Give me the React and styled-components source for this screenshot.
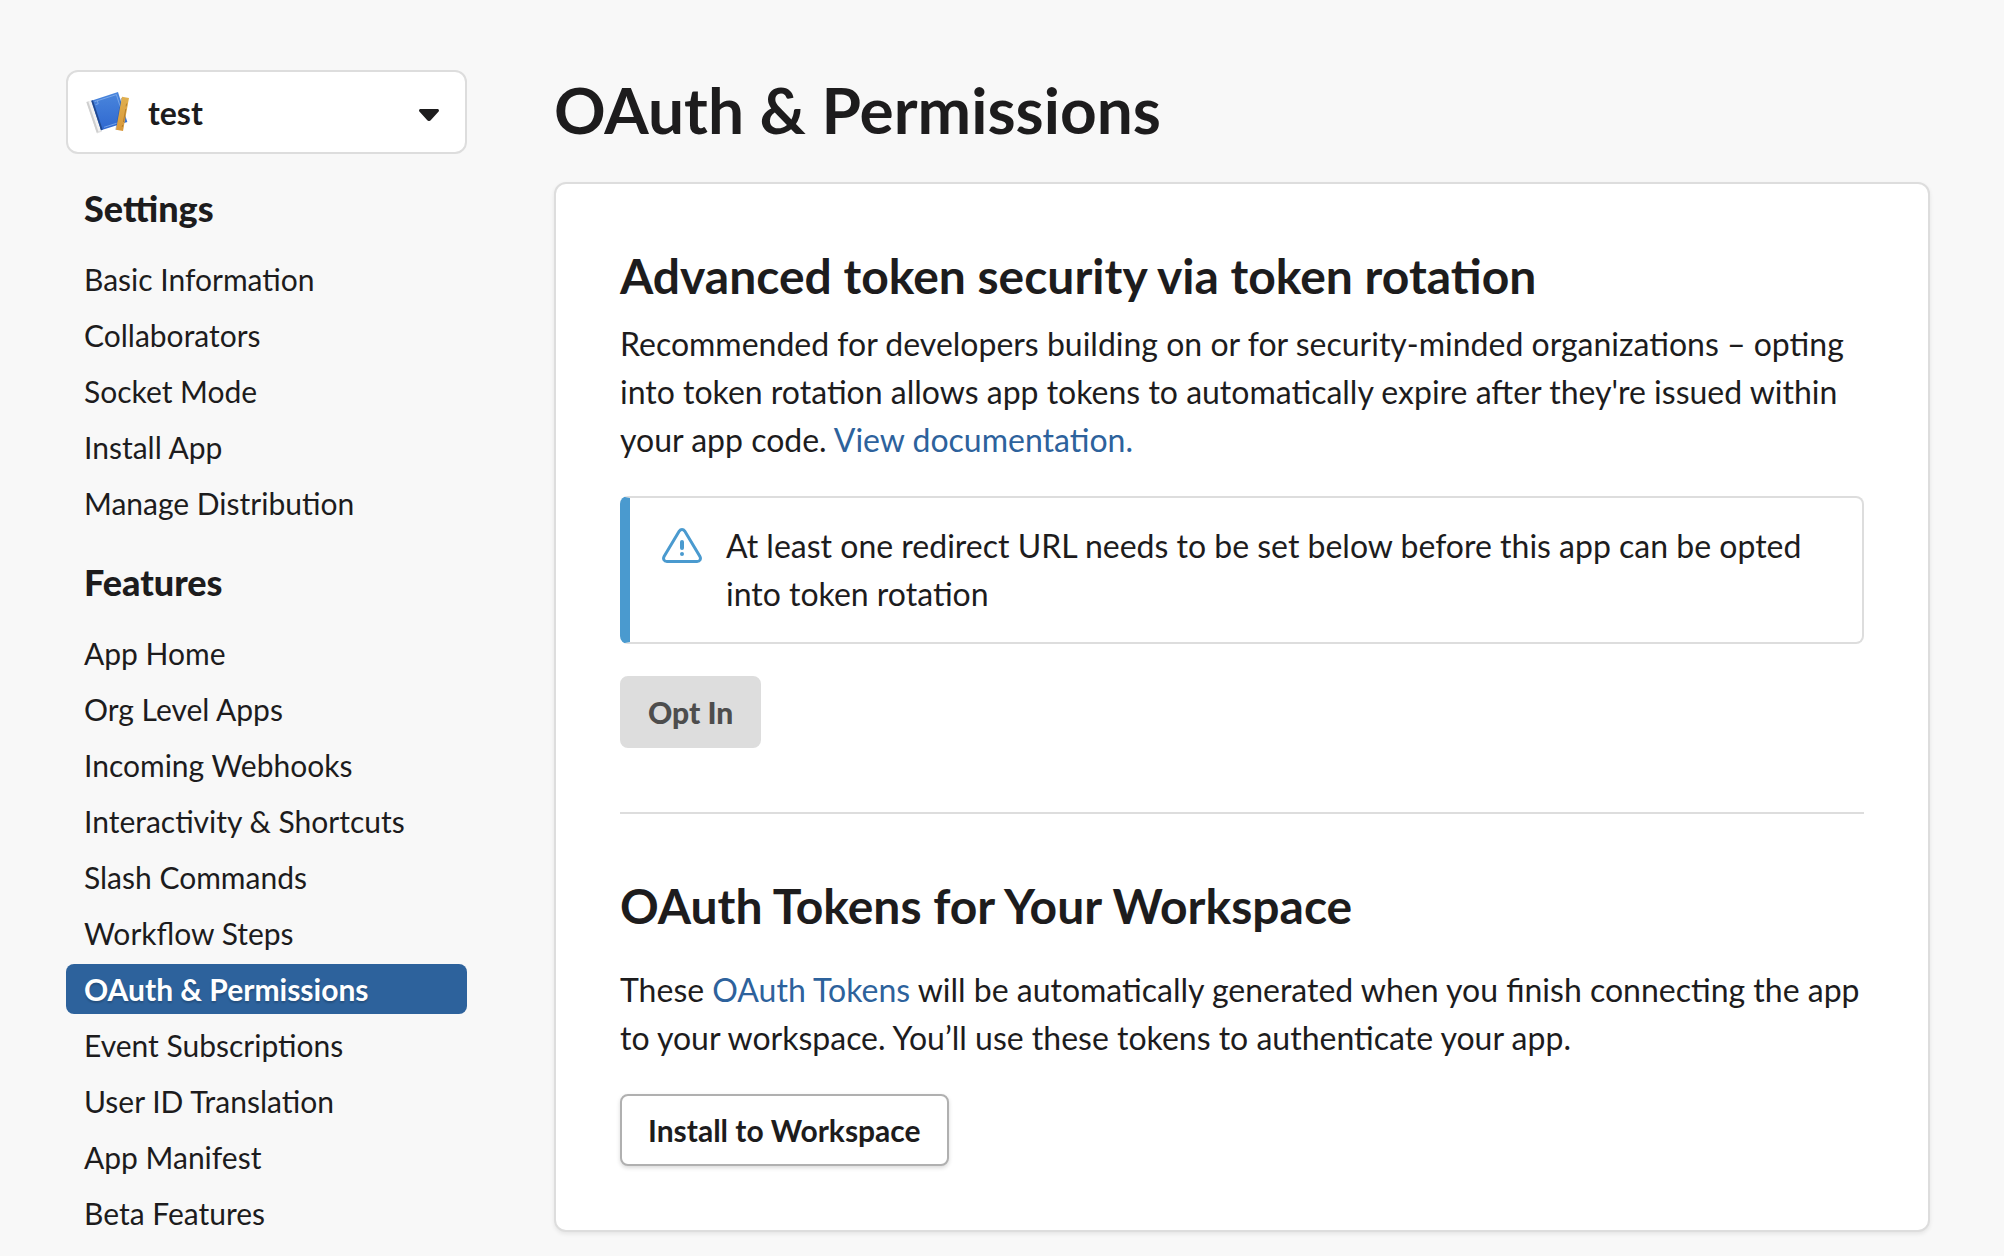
//OAuth & Permissions page of the app settings
import React from "react";
import styled, { createGlobalStyle } from "styled-components";

const GlobalStyle = createGlobalStyle`
  * {
    box-sizing: border-box;
  }

  body {
    margin: 0;
    background-color: #f8f8f8;
    color: #1d1c1d;
    font-family: Lato, "Liberation Sans", sans-serif;
    font-size: 32px;
    line-height: 48px;
  }
`;

const Page = styled.div`
  display: grid;
  grid-template-columns: 401px minmax(0, 1fr);
  gap: 87px;
  padding: 70px 74px 18px 66px;
`;

const Sidebar = styled.aside`
  display: flex;
  flex-direction: column;
`;

const AppPicker = styled.label`
  display: flex;
  align-items: center;
  gap: 18px;
  height: 84px;
  padding: 0 26px 0 18px;
  background-color: #fff;
  border: 2px solid #ddd;
  border-radius: 12px;
`;

const AppSelect = styled.select`
  flex: 1;
  min-width: 0;
  height: 48px;
  padding: 0;
  appearance: none;
  background: none;
  border: none;
  color: inherit;
  font-family: inherit;
  font-size: 32px;
  font-weight: 700;
`;

const NavTitle = styled.h2`
  margin: 30px 18px 22px;
  font-family: "Lato Black", Lato, sans-serif;
  font-size: 36px;
  font-weight: 900;
  line-height: 48px;
`;

const NavList = styled.ul`
  display: flex;
  flex-direction: column;
  gap: 6px;
  margin: 0;
  padding: 0;
  list-style: none;
`;

const NavLink = styled.a`
  display: block;
  padding: 0 18px;
  border-radius: 8px;
  background-color: ${(props) => (props.$active ? "#2d629c" : "transparent")};
  color: ${(props) => (props.$active ? "#fff" : "inherit")};
  font-size: 30px;
  font-weight: ${(props) => (props.$active ? 700 : 400)};
  line-height: 50px;
  text-decoration: none;
  text-shadow: ${(props) =>
    props.$active ? "0 2px 2px rgba(0, 0, 0, 0.2)" : "none"};
`;

const Main = styled.main`
  display: flex;
  flex-direction: column;
  gap: 32px;
`;

const PageTitle = styled.h1`
  margin: 0;
  font-size: 64px;
  font-weight: 700;
  line-height: 80px;
`;

const Card = styled.div`
  padding: 64px;
  background-color: #fff;
  border: 2px solid #ddd;
  border-radius: 12px;
  box-shadow: 0 2px 4px rgba(0, 0, 0, 0.08);
`;

const Section = styled.section`
  & + & {
    margin-top: 64px;
    padding-top: 64px;
    border-top: 2px solid #ddd;
  }
`;

const SectionTitle = styled.h2`
  margin: 0 0 ${(props) => (props.$spaced ? 32 : 16)}px;
  font-size: 48px;
  font-weight: 700;
  line-height: 56px;
`;

const Text = styled.p`
  margin: 0 0 32px;
`;

const TextLink = styled.a`
  color: #2d629c;
  text-decoration: none;
`;

const Alert = styled.div`
  display: flex;
  align-items: flex-start;
  gap: 24px;
  margin-bottom: 32px;
  padding: 24px 32px;
  border: 2px solid #ddd;
  border-left: 10px solid #4a9acf;
  border-radius: 8px;
`;

const AlertIcon = styled.svg`
  flex: none;
  width: 40px;
  height: 48px;
`;

const Button = styled.button`
  display: block;
  padding: 0 26px;
  background-color: #fff;
  border: 2px solid #b0b0b0;
  border-radius: 8px;
  box-shadow: 0 2px 4px rgba(0, 0, 0, 0.15);
  color: #1d1c1d;
  font-family: inherit;
  font-size: 30px;
  font-weight: 700;
  line-height: 68px;

  &:disabled {
    background-color: #ddd;
    border-color: #ddd;
    box-shadow: none;
    color: #4d4d4d;
    font-family: "Lato Black", Lato, sans-serif;
    font-weight: 900;
  }
`;

const settingsLinks = [
  "Basic Information",
  "Collaborators",
  "Socket Mode",
  "Install App",
  "Manage Distribution",
];

const featureLinks = [
  "App Home",
  "Org Level Apps",
  "Incoming Webhooks",
  "Interactivity & Shortcuts",
  "Slash Commands",
  "Workflow Steps",
  "OAuth & Permissions",
  "Event Subscriptions",
  "User ID Translation",
  "App Manifest",
  "Beta Features",
];

function AppIcon() {
  return (
    <svg width="44" height="44" viewBox="0 0 44 44" aria-hidden="true">
      <defs>
        <linearGradient id="cover" x1="0" y1="0" x2="0" y2="1">
          <stop offset="0" stopColor="#4a86dc" />
          <stop offset="1" stopColor="#2f68d0" />
        </linearGradient>
        <linearGradient id="ruler" x1="0" y1="0" x2="0" y2="1">
          <stop offset="0" stopColor="#e0b04f" />
          <stop offset="1" stopColor="#d9983a" />
        </linearGradient>
      </defs>
      <path d="M1 13l5-1.5 10 30-5 2z" fill="#000" opacity="0.12" />
      <path d="M.3 12l5-1.4L15 40.3l-4.3 2.4z" fill="#cfcfcf" />
      <path d="M2.3 11.5l3-.9L15 40.3l-2.5 1.4z" fill="#f2f2f2" />
      <path d="M5.3 10.7L32 2l9.3 30L15 40.3z" fill="url(#cover)" />
      <path d="M5.3 10.7l1.6-.5 9.8 29.6-1.7.5z" fill="#20488f" />
      <path
        d="M8.6 11.6l21.8-7 8.3 26.1-20.7 6.6M9.6 14.6l2.6-.8-.8-3"
        fill="none"
        stroke="#8fb8ee"
        strokeWidth="0.7"
      />
      <path d="M35 8l-5.6 31.7 1 .2L36.4 8z" fill="#1b3f83" opacity="0.4" />
      <path d="M36 6.7L43 8l-6 33-7-1.3z" fill="url(#ruler)" />
      <path
        d="M40.6 13.6l-.5 2.8M39.8 19l-2.4 13M36.6 35l-.4 2"
        stroke="#a87527"
        strokeWidth="0.8"
      />
    </svg>
  );
}

function Caret() {
  return (
    <svg width="20" height="18" viewBox="0 -6 20 18" aria-hidden="true">
      <path
        d="M1.6 0h16.8c1.5 0 2.1 1.6 1 2.7l-7.7 8.5c-1 1.1-2.4 1.1-3.4 0L.6 2.7C-.5 1.6 .1 0 1.6 0z"
        fill="#1d1c1d"
      />
    </svg>
  );
}

function Nav({ title, links }) {
  return (
    <nav aria-label={title}>
      <NavTitle>{title}</NavTitle>
      <NavList>
        {links.map((link) => (
          <li key={link}>
            <NavLink href="#" $active={link === "OAuth & Permissions"}>
              {link}
            </NavLink>
          </li>
        ))}
      </NavList>
    </nav>
  );
}

function App() {
  return (
    <>
      <GlobalStyle />
      <Page>
        <Sidebar>
          <AppPicker>
            <AppIcon />
            <AppSelect aria-label="App">
              <option>test</option>
            </AppSelect>
            <Caret />
          </AppPicker>
          <Nav title="Settings" links={settingsLinks} />
          <Nav title="Features" links={featureLinks} />
        </Sidebar>
        <Main>
          <PageTitle>OAuth &amp; Permissions</PageTitle>
          <Card>
            <Section>
              <SectionTitle>
                Advanced token security via token rotation
              </SectionTitle>
              <Text>
                Recommended for developers building on or for security-minded
                organizations – opting into token rotation allows app tokens to
                automatically expire after they're issued within your app code.{" "}
                <TextLink href="#">View documentation.</TextLink>
              </Text>
              <Alert>
                <AlertIcon viewBox="0 -1 40 48" aria-hidden="true">
                  <path
                    d="M17.3 8.1L2.2 33.2c-1.5 2.6-.2 5.3 2.8 5.3h30c3 0 4.3-2.7 2.8-5.3L22.7 8.1c-1.5-2.3-3.9-2.3-5.4 0z"
                    fill="none"
                    stroke="#4a9acf"
                    strokeWidth="3"
                  />
                  <path
                    d="M20 19v6"
                    stroke="#4a9acf"
                    strokeWidth="4"
                    strokeLinecap="round"
                  />
                  <circle cx="20" cy="31" r="2" fill="#4a9acf" />
                </AlertIcon>
                <span>
                  At least one redirect URL needs to be set below before this
                  app can be opted into token rotation
                </span>
              </Alert>
              <Button disabled>Opt In</Button>
            </Section>
            <Section>
              <SectionTitle $spaced>OAuth Tokens for Your Workspace</SectionTitle>
              <Text>
                These <TextLink href="#">OAuth Tokens</TextLink> will be
                automatically generated when you finish connecting the app to
                your workspace. You’ll use these tokens to authenticate your
                app.
              </Text>
              <Button>Install to Workspace</Button>
            </Section>
          </Card>
        </Main>
      </Page>
    </>
  );
}

export default App;
